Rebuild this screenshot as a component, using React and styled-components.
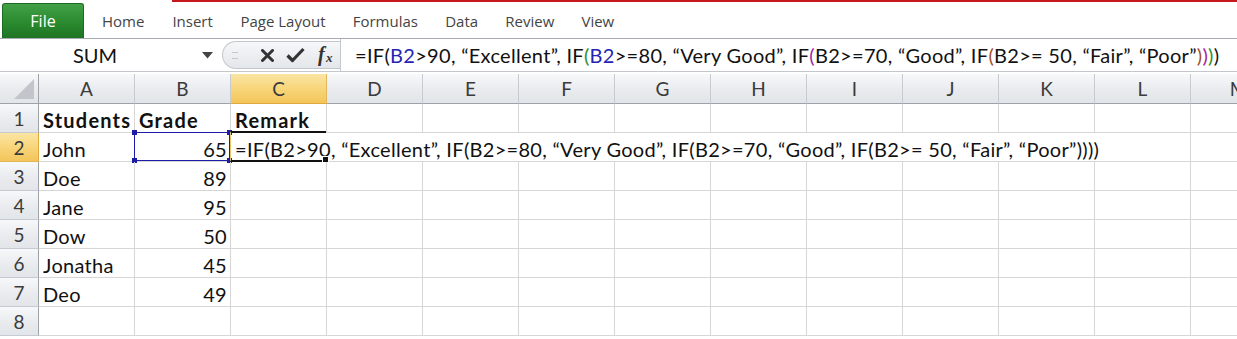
import React from "react";
import styled, { createGlobalStyle, css } from "styled-components";

const GlobalStyle = createGlobalStyle`
  html, body {
    margin: 0;
    padding: 0;
    background: #ffffff;
    overflow: hidden;
  }
  body {
    font-family: "Open Sans", "Noto Sans", sans-serif;
  }
`;

const CELL_FONT = `"Lato", "Liberation Sans", sans-serif`;

const Window = styled.div`
  width: 1237px;
  height: 339px;
  overflow: hidden;
  background: #ffffff;
`;

const Ribbon = styled.div`
  position: relative;
  height: 38px;
  display: flex;
  align-items: flex-end;
  &::before {
    content: "";
    position: absolute;
    left: 172px;
    right: 0;
    top: 0;
    height: 2px;
    background: #c8161d;
  }
`;

const FileTab = styled.div`
  margin-left: 2px;
  margin-right: 4px;
  width: 82px;
  height: 35px;
  box-sizing: border-box;
  display: flex;
  align-items: center;
  justify-content: center;
  border-radius: 3px 3px 0 0;
  background: linear-gradient(#43a047, #2a8a2e 55%, #1f7424);
  border: 1px solid #1b6b20;
  border-bottom: none;
  color: #ffffff;
  font-size: 16px;
`;

const Tab = styled.div`
  height: 35px;
  padding: 0 14px;
  display: flex;
  align-items: center;
  font-size: 15px;
  color: #444444;
  &:nth-child(n + 4) {
    padding: 0 13.6px;
  }
`;

const FormulaBar = styled.div`
  height: 34px;
  box-sizing: border-box;
  display: flex;
  align-items: center;
  border-top: 1px solid #a8abb0;
  border-bottom: 1px solid #c4c7cc;
`;

const NameBox = styled.div`
  width: 218px;
  height: 100%;
  display: flex;
  align-items: center;
  font-family: ${CELL_FONT};
  font-size: 20px;
  color: #111111;
`;

const NameText = styled.div`
  flex: 1;
  text-align: center;
  padding-right: 12px;
`;

const DropArrow = styled.svg`
  width: 11px;
  height: 7px;
  margin-right: 5px;
`;

const ButtonPill = styled.div`
  margin-left: 4px;
  width: 118px;
  height: 28px;
  box-sizing: border-box;
  display: flex;
  align-items: center;
  border-radius: 14px 0 0 14px;
  border: 1px solid #c3c7cd;
  border-right: none;
  background: linear-gradient(#f6f7f9, #e3e6ea);
`;

const Grip = styled.div`
  width: 6px;
  height: 5px;
  margin-left: 9px;
  border-top: 1px solid #c4c8cd;
  border-bottom: 1px solid #c4c8cd;
`;

const BarIcon = styled.svg`
  flex: none;
  margin-left: ${(p) => p.$gap}px;
`;

const FormulaInput = styled.div`
  flex: 1;
  height: 100%;
  box-sizing: border-box;
  border-left: 1px solid #c4c7cc;
  padding-left: 14px;
  display: flex;
  align-items: center;
  font-family: ${CELL_FONT};
  font-size: 20px;
  letter-spacing: 0.3px;
  color: #111111;
  white-space: nowrap;
  overflow: hidden;
`;

const Ref = styled.span`
  color: ${(p) => p.$color};
`;

const Sheet = styled.div`
  margin-top: 2px;
  display: grid;
  grid-template-columns: 39px repeat(13, 96px);
  grid-template-rows: 30px repeat(8, 29px);
  font-family: ${CELL_FONT};
  font-size: 20px;
`;

const headerLook = css`
  box-sizing: border-box;
  display: flex;
  align-items: center;
  justify-content: center;
  color: #3b3b3b;
  font-size: 19px;
  background: ${(p) =>
    p.$active
      ? "linear-gradient(#fbe5a3, #f7d477 55%, #f3c55a)"
      : "linear-gradient(#f7f8fa, #e9ebee 55%, #e2e5e9)"};
`;

const Corner = styled.div`
  ${headerLook};
  position: relative;
  border-right: 1px solid #9ea3aa;
  border-bottom: 1px solid #9ea3aa;
`;

const CornerTriangle = styled.div`
  position: absolute;
  right: 4px;
  bottom: 4px;
  width: 0;
  height: 0;
  border-left: 20px solid transparent;
  border-bottom: 20px solid #c2c6cc;
`;

const ColHeader = styled.div`
  ${headerLook};
  border-right: 1px solid ${(p) => (p.$active ? "#e2b659" : "#c7cbd1")};
  border-bottom: 1px solid ${(p) => (p.$active ? "#e1a93b" : "#9ea3aa")};
`;

const RowHeader = styled.div`
  ${headerLook};
  border-right: 1px solid ${(p) => (p.$active ? "#e1a93b" : "#9ea3aa")};
  border-bottom: 1px solid ${(p) => (p.$active ? "#e2b659" : "#c7cbd1")};
`;

const Cell = styled.div`
  position: relative;
  box-sizing: border-box;
  display: flex;
  align-items: flex-end;
  justify-content: ${(p) => (p.$num ? "flex-end" : "flex-start")};
  padding: 0 3px 0 4px;
  border-right: 1px solid #d6d6d6;
  border-bottom: 1px solid #d6d6d6;
  color: #111111;
  font-weight: ${(p) => (p.$bold ? 700 : 400)};
  letter-spacing: ${(p) => (p.$bold ? "1.2px" : "0.3px")};
  white-space: nowrap;
  ${(p) => p.$span && `grid-column: span ${p.$span};`}
`;

const RefBox = styled.div`
  position: absolute;
  left: -1px;
  top: -1px;
  right: 0;
  bottom: 0;
  border: 1px solid #1c1ca6;
  pointer-events: none;
`;

const Handle = styled.div`
  position: absolute;
  width: 5px;
  height: 5px;
  background: #1c1ca6;
  ${(p) => (p.$top ? "top: -3px;" : "bottom: -3px;")}
  ${(p) => (p.$left ? "left: -3px;" : "right: -3px;")}
`;

const ActiveFrame = styled.div`
  position: absolute;
  left: -1px;
  top: -2px;
  width: 96px;
  height: 31px;
  box-sizing: border-box;
  border-top: 2px solid #111111;
  border-bottom: 2px solid #111111;
  border-left: 1px solid #e8c56a;
  pointer-events: none;
`;

const FillHandle = styled.div`
  position: absolute;
  right: -3px;
  bottom: -3px;
  width: 5px;
  height: 5px;
  background: #111111;
  border: 1px solid #ffffff;
`;

const columns = ["A", "B", "C", "D", "E", "F", "G", "H", "I", "J", "K", "L", "M"];

const students = [
  ["John", 65],
  ["Doe", 89],
  ["Jane", 95],
  ["Dow", 50],
  ["Jonatha", 45],
  ["Deo", 49],
];

const tabs = ["Home", "Insert", "Page Layout", "Formulas", "Data", "Review", "View"];

const plainFormula =
  "=IF(B2>90, \u201CExcellent\u201D, IF(B2>=80, \u201CVery Good\u201D, IF(B2>=70, \u201CGood\u201D, IF(B2>= 50, \u201CFair\u201D, \u201CPoor\u201D))))";

const BLUE = "#2424b4";
const GREEN = "#2f8f2f";
const PURPLE = "#a425a4";
const BROWN = "#a3522c";

function ColoredFormula() {
  return (
    <span>
      =IF(<Ref $color={BLUE}>B2</Ref>&gt;90, “Excellent”, IF
      <Ref $color={GREEN}>(</Ref>
      <Ref $color={BLUE}>B2</Ref>&gt;=80, “Very Good”, IF
      <Ref $color={PURPLE}>(</Ref>B2&gt;=70, “Good”, IF
      <Ref $color={BROWN}>(</Ref>B2&gt;= 50, “Fair”, “Poor”
      <Ref $color={BROWN}>)</Ref>
      <Ref $color={PURPLE}>)</Ref>
      <Ref $color={GREEN}>)</Ref>)
    </span>
  );
}

function EmptyCells({ count }) {
  return Array.from({ length: count }, (_, i) => <Cell key={i} />);
}

export default function App() {
  return (
    <Window>
      <GlobalStyle />
      <Ribbon>
        <FileTab>File</FileTab>
        {tabs.map((t) => (
          <Tab key={t}>{t}</Tab>
        ))}
      </Ribbon>

      <FormulaBar>
        <NameBox>
          <NameText>SUM</NameText>
          <DropArrow viewBox="0 0 11 7">
            <path d="M0 0 H11 L5.5 6.5 Z" fill="#444" />
          </DropArrow>
        </NameBox>
        <ButtonPill>
          <Grip />
          <BarIcon $gap={23} width="13" height="13" viewBox="0 0 13 13">
            <path d="M1.5 1.5 L11.5 11.5 M11.5 1.5 L1.5 11.5" stroke="#333" strokeWidth="3" strokeLinecap="round" />
          </BarIcon>
          <BarIcon $gap={12} width="19" height="16" viewBox="0 0 19 16">
            <path d="M1.5 8.5 L6.5 13.5 L17.5 2" stroke="#333" strokeWidth="3.2" fill="none" strokeLinejoin="round" />
          </BarIcon>
          <BarIcon $gap={12} width="22" height="22" viewBox="0 0 22 22">
            <text x="1" y="17" fontFamily="'Liberation Serif', serif" fontStyle="italic" fontWeight="700" fontSize="20" fill="#333">f</text>
            <text x="9" y="18" fontFamily="'Liberation Serif', serif" fontStyle="italic" fontWeight="700" fontSize="13" fill="#333">x</text>
          </BarIcon>
        </ButtonPill>
        <FormulaInput>
          <ColoredFormula />
        </FormulaInput>
      </FormulaBar>

      <Sheet>
        <Corner>
          <CornerTriangle />
        </Corner>
        {columns.map((c) => (
          <ColHeader key={c} $active={c === "C"}>
            {c}
          </ColHeader>
        ))}

        <RowHeader>1</RowHeader>
        <Cell $bold>Students</Cell>
        <Cell $bold>Grade</Cell>
        <Cell $bold>Remark</Cell>
        <EmptyCells count={10} />

        {students.map(([name, grade], i) => {
          const row = i + 2;
          const editing = row === 2;
          return (
            <React.Fragment key={name}>
              <RowHeader $active={editing}>{row}</RowHeader>
              <Cell>{name}</Cell>
              <Cell $num>
                {grade}
                {editing && (
                  <RefBox>
                    <Handle $top $left />
                    <Handle $top />
                    <Handle $left />
                    <Handle />
                  </RefBox>
                )}
              </Cell>
              {editing ? (
                <>
                  <Cell $span={10}>
                    {plainFormula}
                    <ActiveFrame>
                      <FillHandle />
                    </ActiveFrame>
                  </Cell>
                  <Cell />
                </>
              ) : (
                <EmptyCells count={11} />
              )}
            </React.Fragment>
          );
        })}

        <RowHeader>8</RowHeader>
        <EmptyCells count={13} />
      </Sheet>
    </Window>
  );
}
